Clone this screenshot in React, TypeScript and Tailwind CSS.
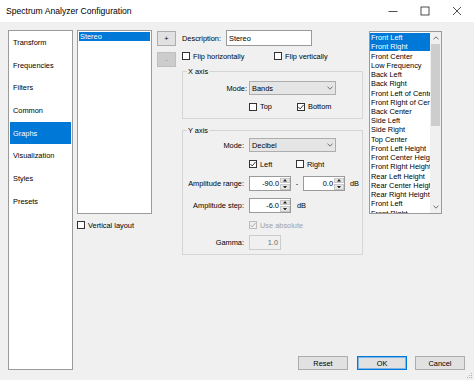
import React from 'react';

const navItems = ['Transform', 'Frequencies', 'Filters', 'Common', 'Graphs', 'Visualization', 'Styles', 'Presets'];

const channels = [
  'Front Left',
  'Front Right',
  'Front Center',
  'Low Frequency',
  'Back Left',
  'Back Right',
  'Front Left of Center',
  'Front Right of Center',
  'Back Center',
  'Side Left',
  'Side Right',
  'Top Center',
  'Front Left Height',
  'Front Center Height',
  'Front Right Height',
  'Rear Left Height',
  'Rear Center Height',
  'Rear Right Height',
  'Front Left',
  'Front Right',
];

function Check({ checked, disabled }: { checked?: boolean; disabled?: boolean }) {
  return (
    <span
      className={`flex h-[8px] w-[8px] shrink-0 items-center justify-center border ${
        disabled ? 'border-[#bcbcbc] bg-[#f0f0f0]' : 'border-[#333333] bg-white'
      }`}
    >
      {checked && (
        <svg width="6" height="6" viewBox="0 0 6 6">
          <polyline
            points="0.4,3 2.2,4.9 5.6,0.9"
            fill="none"
            stroke={disabled ? '#a8a8a8' : '#222'}
            strokeWidth="0.9"
          />
        </svg>
      )}
    </span>
  );
}

function CheckBox({
  label,
  checked,
  disabled,
  className = '',
}: {
  label: string;
  checked?: boolean;
  disabled?: boolean;
  className?: string;
}) {
  return (
    <div className={`flex h-[8px] items-center ${className}`}>
      <Check checked={checked} disabled={disabled} />
      <span className={`ml-[3px] whitespace-nowrap ${disabled ? 'text-[#a0a0a0]' : ''}`}>{label}</span>
    </div>
  );
}

function Combo({ value }: { value: string }) {
  return (
    <div className="flex h-[14px] w-[87px] items-center border border-[#adadad] bg-[#e5e5e5] pl-[2px]">
      <span className="flex-1">{value}</span>
      <svg width="6" height="4" viewBox="0 0 6 4" className="mr-[2px]">
        <polyline points="0.5,0.6 3,3.2 5.5,0.6" fill="none" stroke="#555" strokeWidth="0.8" />
      </svg>
    </div>
  );
}

function Spin({ value }: { value: string }) {
  return (
    <div className="flex h-[15px] w-[42px] border border-[#9a9a9a] bg-white">
      <span className="flex-1 pr-[1px] text-right leading-[13px]">{value}</span>
      <div className="flex w-[10px] flex-col gap-[1px] py-[0.5px] pr-[0.5px]">
        <span className="flex flex-1 items-center justify-center border border-[#c8c8c8] bg-[#e6e6e6]">
          <svg width="4" height="2.5" viewBox="0 0 4 2.5">
            <polygon points="0,2.5 2,0 4,2.5" fill="#222" />
          </svg>
        </span>
        <span className="flex flex-1 items-center justify-center border border-[#c8c8c8] bg-[#e6e6e6]">
          <svg width="4" height="2.5" viewBox="0 0 4 2.5">
            <polygon points="0,0 4,0 2,2.5" fill="#222" />
          </svg>
        </span>
      </div>
    </div>
  );
}

function Button({ label, primary }: { label: string; primary?: boolean }) {
  return (
    <div
      className={`flex h-[14px] w-[50px] items-center justify-center border bg-[#e1e1e1] ${
        primary ? 'border-[#0078d7] shadow-[inset_0_0_0_1px_#7fb6e6]' : 'border-[#adadad]'
      }`}
    >
      {label}
    </div>
  );
}

export default function App() {
  return (
    <div className="relative flex h-[380px] w-[474px] flex-col overflow-hidden bg-[#f0f0f0] font-['Liberation_Sans',Arial,sans-serif] text-[7.4px] leading-[9px] text-black">
      {/* Title bar */}
      <div className="flex h-[22px] shrink-0 items-center bg-white">
        <span className="flex-1 pl-[6px] text-[8.6px]">Spectrum Analyzer Configuration</span>
        <div className="flex pr-[1px]">
          <div className="flex h-[22px] w-[32px] items-center justify-center">
            <svg width="10" height="10" viewBox="0 0 10 10">
              <line x1="0.5" y1="5.5" x2="9.5" y2="5.5" stroke="#222" strokeWidth="0.8" />
            </svg>
          </div>
          <div className="flex h-[22px] w-[32px] items-center justify-center">
            <svg width="10" height="10" viewBox="0 0 10 10">
              <rect x="1" y="1" width="8" height="8" fill="none" stroke="#222" strokeWidth="0.8" />
            </svg>
          </div>
          <div className="flex h-[22px] w-[32px] items-center justify-center">
            <svg width="10" height="10" viewBox="0 0 10 10">
              <line x1="1" y1="1" x2="9" y2="9" stroke="#222" strokeWidth="0.8" />
              <line x1="9" y1="1" x2="1" y2="9" stroke="#222" strokeWidth="0.8" />
            </svg>
          </div>
        </div>
      </div>

      {/* Body */}
      <div className="flex flex-1 pt-[8px] pr-[9px] pb-[10px] pl-[8px]">
        {/* Page list */}
        <div className="flex w-[65px] flex-col border border-[#9b9b9b] bg-white px-[1px]">
          {navItems.map((item) => (
            <div
              key={item}
              className={`flex h-[22.7px] items-center px-[3px] ${item === 'Graphs' ? 'bg-[#0078d7] text-white' : ''}`}
            >
              {item}
            </div>
          ))}
        </div>

        <div className="ml-[4px] flex flex-1 flex-col">
          <div className="flex">
            {/* Profiles */}
            <div className="flex w-[75px] flex-col">
              <div className="h-[184px] border border-[#9b9b9b] bg-white px-[1px] pt-[1px]">
                <div className="flex h-[9px] items-center bg-[#0078d7] pl-[1px] text-white">Stereo</div>
              </div>
              <CheckBox label="Vertical layout" className="mt-[7px]" />
            </div>

            {/* Add / remove */}
            <div className="ml-[5px] flex w-[19px] flex-col pt-[1px]">
              <div className="flex h-[15px] items-center justify-center border border-[#adadad] bg-[#e1e1e1]">+</div>
              <div className="mt-[6px] flex h-[15px] items-center justify-center border border-[#bfbfbf] bg-[#cccccc] text-[#9a9a9a]">
                -
              </div>
            </div>

            {/* Settings */}
            <div className="ml-[6px] flex w-[181px] flex-col">
              <div className="flex h-[16px] items-center">
                <span className="w-[44px]">Description:</span>
                <div className="flex h-[16px] w-[86px] items-center border border-[#9a9a9a] bg-white pl-[2px]">Stereo</div>
              </div>
              <div className="mt-[6px] flex h-[8px] items-center">
                <CheckBox label="Flip horizontally" className="w-[92px]" />
                <CheckBox label="Flip vertically" />
              </div>

              <fieldset className="mt-[7px] w-[181px] border border-[#d5d5d5] pt-[5px] pb-[7px]">
                <legend className="ml-[4px] px-[1px] leading-[9px]">X axis</legend>
                <div className="flex h-[14px] items-center">
                  <span className="w-[64px] text-right">Mode:</span>
                  <div className="ml-[2px]">
                    <Combo value="Bands" />
                  </div>
                </div>
                <div className="mt-[7px] flex h-[9px] items-center pl-[66px]">
                  <CheckBox label="Top" className="w-[48px]" />
                  <CheckBox label="Bottom" checked />
                </div>
              </fieldset>

              <fieldset className="mt-[7px] w-[181px] border border-[#d5d5d5] pt-[3px] pb-[4px]">
                <legend className="ml-[4px] px-[1px] leading-[9px]">Y axis</legend>
                <div className="flex h-[14px] items-center">
                  <span className="w-[61px] text-right">Mode:</span>
                  <div className="ml-[5px]">
                    <Combo value="Decibel" />
                  </div>
                </div>
                <div className="mt-[8px] flex h-[8px] items-center pl-[66px]">
                  <CheckBox label="Left" checked className="w-[47px]" />
                  <CheckBox label="Right" />
                </div>
                <div className="mt-[8px] flex h-[15px] items-center">
                  <span className="w-[61px] text-right">Amplitude range:</span>
                  <div className="ml-[5px]">
                    <Spin value="-90.0" />
                  </div>
                  <span className="w-[12px] text-center">-</span>
                  <Spin value="0.0" />
                  <span className="ml-[5px]">dB</span>
                </div>
                <div className="mt-[7px] flex h-[15px] items-center">
                  <span className="w-[61px] text-right">Amplitude step:</span>
                  <div className="ml-[5px]">
                    <Spin value="-6.0" />
                  </div>
                  <span className="ml-[6px]">dB</span>
                </div>
                <div className="mt-[8px] flex h-[8px] items-center pl-[66px]">
                  <CheckBox label="Use absolute" checked disabled />
                </div>
                <div className="mt-[6px] flex h-[15px] items-center">
                  <span className="w-[61px] text-right">Gamma:</span>
                  <div className="ml-[5px] flex h-[15px] w-[32px] items-center justify-end border border-[#cccccc] bg-[#f0f0f0] pr-[2px] text-[#6d6d6d]">
                    1.0
                  </div>
                </div>
              </fieldset>
            </div>

            {/* Channels */}
            <div className="ml-[6px] mt-[1px] flex h-[183px] w-[73px] border border-[#9b9b9b] bg-white">
              <div className="flex w-[60px] flex-col overflow-hidden pt-[1px]">
                {channels.map((ch, i) => (
                  <div
                    key={i}
                    className={`flex h-[9.24px] shrink-0 items-center whitespace-nowrap pl-[1px] ${
                      i < 2 ? 'bg-[#0078d7] text-white' : ''
                    }`}
                  >
                    {ch}
                  </div>
                ))}
              </div>
              <div className="flex w-[11px] flex-col bg-[#f0f0f0]">
                <div className="flex h-[12px] items-center justify-center">
                  <svg width="6" height="4" viewBox="0 0 6 4">
                    <polyline points="0.5,3.4 3,0.8 5.5,3.4" fill="none" stroke="#606060" strokeWidth="0.9" />
                  </svg>
                </div>
                <div className="mx-[1px] h-[82px] bg-[#cdcdcd]" />
                <div className="flex-1" />
                <div className="flex h-[12px] items-center justify-center">
                  <svg width="6" height="4" viewBox="0 0 6 4">
                    <polyline points="0.5,0.6 3,3.2 5.5,0.6" fill="none" stroke="#606060" strokeWidth="0.9" />
                  </svg>
                </div>
              </div>
            </div>
          </div>

          {/* Dialog buttons */}
          <div className="mt-auto flex justify-end">
            <Button label="Reset" />
            <div className="ml-[9px]">
              <Button label="OK" primary />
            </div>
            <div className="ml-[8px]">
              <Button label="Cancel" />
            </div>
          </div>
        </div>
      </div>

      {/* Size grip */}
      <svg width="7" height="7" viewBox="0 0 7 7" className="absolute right-[1px] bottom-[1px]">
        <rect x="5" y="1" width="1" height="1" fill="#b0b0b0" />
        <rect x="3" y="3" width="1" height="1" fill="#b0b0b0" />
        <rect x="5" y="3" width="1" height="1" fill="#b0b0b0" />
        <rect x="1" y="5" width="1" height="1" fill="#b0b0b0" />
        <rect x="3" y="5" width="1" height="1" fill="#b0b0b0" />
        <rect x="5" y="5" width="1" height="1" fill="#b0b0b0" />
      </svg>
    </div>
  );
}
